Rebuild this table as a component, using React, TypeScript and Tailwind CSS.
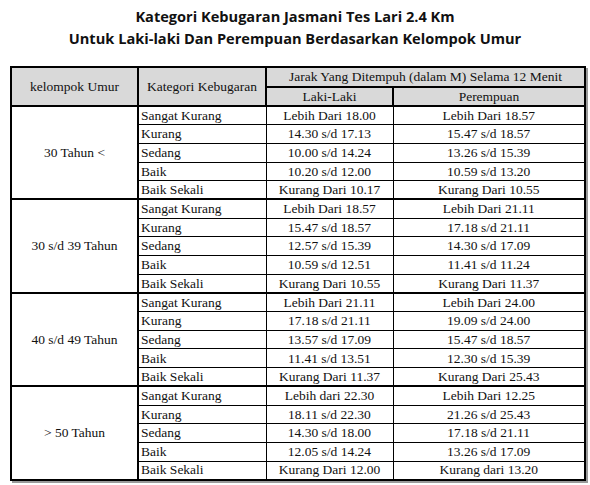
import React from "react";

type Row = [string, string, string];
const groups: { age: string; rows: Row[] }[] = [
  {
    age: "30 Tahun <",
    rows: [
      ["Sangat Kurang", "Lebih Dari 18.00", "Lebih Dari 18.57"],
      ["Kurang", "14.30 s/d 17.13", "15.47 s/d 18.57"],
      ["Sedang", "10.00 s/d 14.24", "13.26 s/d 15.39"],
      ["Baik", "10.20 s/d 12.00", "10.59 s/d 13.20"],
      ["Baik Sekali", "Kurang Dari 10.17", "Kurang Dari 10.55"],
    ],
  },
  {
    age: "30 s/d 39 Tahun",
    rows: [
      ["Sangat Kurang", "Lebih Dari 18.57", "Lebih Dari 21.11"],
      ["Kurang", "15.47 s/d 18.57", "17.18 s/d 21.11"],
      ["Sedang", "12.57 s/d 15.39", "14.30 s/d 17.09"],
      ["Baik", "10.59 s/d 12.51", "11.41 s/d 11.24"],
      ["Baik Sekali", "Kurang Dari 10.55", "Kurang Dari 11.37"],
    ],
  },
  {
    age: "40 s/d 49 Tahun",
    rows: [
      ["Sangat Kurang", "Lebih Dari 21.11", "Lebih Dari 24.00"],
      ["Kurang", "17.18 s/d 21.11", "19.09 s/d 24.00"],
      ["Sedang", "13.57 s/d 17.09", "15.47 s/d 18.57"],
      ["Baik", "11.41 s/d 13.51", "12.30 s/d 15.39"],
      ["Baik Sekali", "Kurang Dari 11.37", "Kurang Dari 25.43"],
    ],
  },
  {
    age: "> 50 Tahun",
    rows: [
      ["Sangat Kurang", "Lebih dari 22.30", "Lebih Dari 12.25"],
      ["Kurang", "18.11 s/d 22.30", "21.26 s/d 25.43"],
      ["Sedang", "14.30 s/d 18.00", "17.18 s/d 21.11"],
      ["Baik", "12.05 s/d 14.24", "13.26 s/d 17.09"],
      ["Baik Sekali", "Kurang Dari 12.00", "Kurang dari 13.20"],
    ],
  },
];

export default function App() {
  return (
    <div className="w-[590px] h-[485px] bg-white overflow-hidden">
      <div className="pt-[5px] text-center font-['Open_Sans',sans-serif] font-bold text-[14.6px] leading-[22px] text-[#111]">
        <div>Kategori Kebugaran Jasmani Tes Lari 2.4 Km</div>
        <div>Untuk Laki-laki Dan Perempuan Berdasarkan Kelompok Umur</div>
      </div>
      <div className="pl-[10px] pt-[17px]">
        <table className="border-collapse border-2 border-black font-['Liberation_Serif',serif] text-[13.5px] text-[#111] shadow-[2px_2px_0_#9a9a9a] leading-none">
          <colgroup>
            <col className="w-[127px]" />
            <col className="w-[128px]" />
            <col className="w-[127px]" />
            <col className="w-[192px]" />
          </colgroup>
          <thead>
            <tr className="bg-[#d9d9d9]">
              <td rowSpan={2} className="border-2 border-black text-center align-middle">kelompok Umur</td>
              <td rowSpan={2} className="border-2 border-black text-center align-middle">Kategori Kebugaran</td>
              <td colSpan={2} className="border-2 border-black text-center h-[20px] p-0">Jarak Yang Ditempuh (dalam M) Selama 12 Menit</td>
            </tr>
            <tr className="bg-[#d9d9d9]">
              <td className="border-2 border-black text-center h-[19px] p-0">Laki-Laki</td>
              <td className="border-2 border-black text-center h-[19px] p-0">Perempuan</td>
            </tr>
          </thead>
          <tbody>
            {groups.map((g) =>
              g.rows.map((r, i) => (
                <tr key={g.age + i} className={i === 0 ? "border-t-2 border-black" : ""}>
                  {i === 0 && (
                    <td rowSpan={5} className="border-2 border-black text-center align-middle">
                      {g.age}
                    </td>
                  )}
                  <td className={`border border-black text-left pl-[2px] h-[18.7px] p-0 ${i === 0 ? "border-t-2" : ""}`}>{r[0]}</td>
                  <td className={`border border-black text-center h-[18.7px] p-0 ${i === 0 ? "border-t-2" : ""}`}>{r[1]}</td>
                  <td className={`border border-black border-r-2 text-center h-[18.7px] p-0 ${i === 0 ? "border-t-2" : ""}`}>{r[2]}</td>
                </tr>
              ))
            )}
          </tbody>
        </table>
      </div>
    </div>
  );
}
